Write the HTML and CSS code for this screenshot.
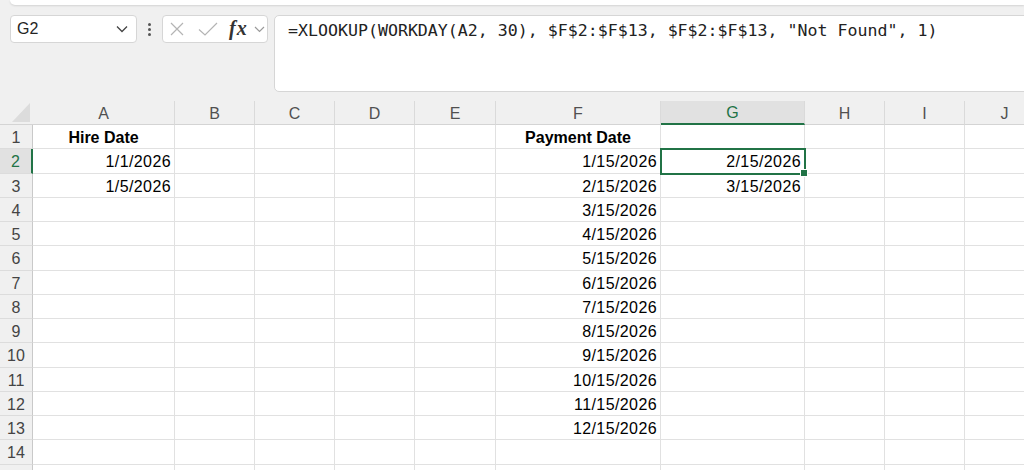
FILE: index.html
```html
<!DOCTYPE html>
<html lang="en">
<head>
    <meta charset="UTF-8">
    <meta name="viewport" content="width=device-width, initial-scale=1.0">
    <title>Book1 - Excel</title>
    <link rel="stylesheet" href="styles.css">
</head>
<body>
    <div class="ribbon-edge"></div>

    <div class="formula-bar">
        <div class="name-box">
            <span>G2</span>
            <svg width="12" height="8" viewBox="0 0 12 8"><polyline points="1,1.5 6,6.5 11,1.5" fill="none" stroke="#444" stroke-width="1.3"/></svg>
        </div>
        <div class="more-dots"><i></i><i></i><i></i></div>
        <div class="fx-box">
            <svg class="ico-cancel" width="14" height="14" viewBox="0 0 14 14"><path d="M1 1 L13 13 M13 1 L1 13" stroke="#b4b4b4" stroke-width="1.2" fill="none"/></svg>
            <svg class="ico-enter" width="20" height="14" viewBox="0 0 20 14"><polyline points="1,7.5 7,13 19,1" fill="none" stroke="#b4b4b4" stroke-width="1.2"/></svg>
            <span class="fx">fx</span>
            <svg class="ico-more" width="11" height="7" viewBox="0 0 11 7"><polyline points="1,1 5.5,5.5 10,1" fill="none" stroke="#9a9a9a" stroke-width="1.2"/></svg>
        </div>
        <div class="formula-input">=XLOOKUP(WORKDAY(A2, 30), $F$2:$F$13, $F$2:$F$13, "Not Found", 1)</div>
    </div>

    <div class="sheet">
        <div class="corner"></div><div class="hd">A</div><div class="hd">B</div><div class="hd">C</div><div class="hd">D</div><div class="hd">E</div><div class="hd">F</div><div class="hd sel-col">G</div><div class="hd">H</div><div class="hd">I</div><div class="hd">J</div>

        <div class="rh">1</div><div class="c b">Hire Date</div><div class="c"></div><div class="c"></div><div class="c"></div><div class="c"></div><div class="c b">Payment Date</div><div class="c"></div><div class="c"></div><div class="c"></div><div class="c"></div>
        <div class="rh sel-row">2</div><div class="c r">1/1/2026</div><div class="c"></div><div class="c"></div><div class="c"></div><div class="c"></div><div class="c r">1/15/2026</div><div class="c r active">2/15/2026</div><div class="c"></div><div class="c"></div><div class="c"></div>
        <div class="rh">3</div><div class="c r">1/5/2026</div><div class="c"></div><div class="c"></div><div class="c"></div><div class="c"></div><div class="c r">2/15/2026</div><div class="c r">3/15/2026</div><div class="c"></div><div class="c"></div><div class="c"></div>
        <div class="rh">4</div><div class="c"></div><div class="c"></div><div class="c"></div><div class="c"></div><div class="c"></div><div class="c r">3/15/2026</div><div class="c"></div><div class="c"></div><div class="c"></div><div class="c"></div>
        <div class="rh">5</div><div class="c"></div><div class="c"></div><div class="c"></div><div class="c"></div><div class="c"></div><div class="c r">4/15/2026</div><div class="c"></div><div class="c"></div><div class="c"></div><div class="c"></div>
        <div class="rh">6</div><div class="c"></div><div class="c"></div><div class="c"></div><div class="c"></div><div class="c"></div><div class="c r">5/15/2026</div><div class="c"></div><div class="c"></div><div class="c"></div><div class="c"></div>
        <div class="rh">7</div><div class="c"></div><div class="c"></div><div class="c"></div><div class="c"></div><div class="c"></div><div class="c r">6/15/2026</div><div class="c"></div><div class="c"></div><div class="c"></div><div class="c"></div>
        <div class="rh">8</div><div class="c"></div><div class="c"></div><div class="c"></div><div class="c"></div><div class="c"></div><div class="c r">7/15/2026</div><div class="c"></div><div class="c"></div><div class="c"></div><div class="c"></div>
        <div class="rh">9</div><div class="c"></div><div class="c"></div><div class="c"></div><div class="c"></div><div class="c"></div><div class="c r">8/15/2026</div><div class="c"></div><div class="c"></div><div class="c"></div><div class="c"></div>
        <div class="rh">10</div><div class="c"></div><div class="c"></div><div class="c"></div><div class="c"></div><div class="c"></div><div class="c r">9/15/2026</div><div class="c"></div><div class="c"></div><div class="c"></div><div class="c"></div>
        <div class="rh">11</div><div class="c"></div><div class="c"></div><div class="c"></div><div class="c"></div><div class="c"></div><div class="c r">10/15/2026</div><div class="c"></div><div class="c"></div><div class="c"></div><div class="c"></div>
        <div class="rh">12</div><div class="c"></div><div class="c"></div><div class="c"></div><div class="c"></div><div class="c"></div><div class="c r">11/15/2026</div><div class="c"></div><div class="c"></div><div class="c"></div><div class="c"></div>
        <div class="rh">13</div><div class="c"></div><div class="c"></div><div class="c"></div><div class="c"></div><div class="c"></div><div class="c r">12/15/2026</div><div class="c"></div><div class="c"></div><div class="c"></div><div class="c"></div>
        <div class="rh">14</div><div class="c"></div><div class="c"></div><div class="c"></div><div class="c"></div><div class="c"></div><div class="c"></div><div class="c"></div><div class="c"></div><div class="c"></div><div class="c"></div>
        <div class="rh"></div><div class="c"></div><div class="c"></div><div class="c"></div><div class="c"></div><div class="c"></div><div class="c"></div><div class="c"></div><div class="c"></div><div class="c"></div><div class="c"></div>
    </div>
</body>
</html>
```

FILE: styles.css
```css
* {
    box-sizing: border-box;
}
body {
    margin: 0;
    height: 470px;
    overflow: hidden;
    background-color: #f0f0f0;
    font-family: "Liberation Sans", Arial, sans-serif;
    color: #000;
}

.ribbon-edge {
    height: 5px;
    margin-left: 10px;
    background-color: #fff;
    border-bottom-left-radius: 6px;
    box-shadow: rgba(0, 0, 0, 0.12) 0px 1px 2px;
}

/* formula bar */
.formula-bar {
    display: flex;
    align-items: flex-start;
    padding: 10px 0 0 10px;
}
.formula-bar > * {
    flex-shrink: 0;
}
.name-box {
    width: 127px;
    height: 28px;
    display: flex;
    align-items: center;
    justify-content: space-between;
    padding: 0 8px 0 6px;
    background-color: #fff;
    border: 1px solid #d6d6d6;
    border-radius: 4px;
    font-size: 16px;
    color: #242424;
}
.more-dots {
    width: 25px;
    height: 28px;
    display: flex;
    flex-direction: column;
    align-items: center;
    justify-content: center;
    gap: 2px;
}
.more-dots i {
    width: 3px;
    height: 3px;
    border-radius: 50%;
    background-color: #555;
}
.fx-box {
    width: 106px;
    height: 28px;
    display: flex;
    align-items: center;
    background-color: #fff;
    border: 1px solid #d6d6d6;
    border-radius: 4px;
}
.ico-cancel {
    margin-left: 7px;
}
.ico-enter {
    margin-left: 14px;
}
.fx {
    margin-left: 11px;
    margin-top: -2px;
    font-family: "Liberation Serif", serif;
    font-style: italic;
    font-weight: bold;
    font-size: 20px;
    letter-spacing: 1px;
    line-height: 1;
    color: #333;
}
.ico-more {
    margin-left: 6px;
}
.formula-input {
    width: 800px;
    height: 77px;
    margin-left: 6px;
    padding: 5px 0 0 13px;
    background-color: #fff;
    border: 1px solid #d6d6d6;
    border-radius: 5px;
    font-family: "DejaVu Sans Mono", monospace;
    font-size: 16.6px;
    line-height: 20px;
    color: #222;
    white-space: pre;
}

/* grid */
.sheet {
    margin-top: 9px;
    display: grid;
    grid-template-columns: 33px 142px 80px 80px 80px 81px 165px 144px 80px 80px 80px;
    grid-template-rows: 24px repeat(15, 24.25px);
    width: 1045px;
}
.corner {
    position: relative;
    background-color: #f0f0f0;
    border-bottom: 1px solid #d4d4d4;
}
.corner::after {
    content: "";
    position: absolute;
    right: 3px;
    bottom: 2px;
    width: 18px;
    height: 19px;
    background-color: #dcdcdc;
    clip-path: polygon(100% 0, 100% 100%, 0 100%);
}
.hd {
    display: flex;
    align-items: center;
    justify-content: center;
    padding-top: 2px;
    background-color: #f0f0f0;
    border-right: 1px solid #dadada;
    border-bottom: 1px solid #d4d4d4;
    font-size: 16px;
    color: #505050;
}
.hd.sel-col {
    background-color: #e1e1e1;
    color: #217346;
    border-bottom: 2px solid #217346;
}
.rh {
    display: flex;
    align-items: center;
    justify-content: center;
    padding-top: 3px;
    background-color: #f0f0f0;
    border-right: 1px solid #c9c9c9;
    border-bottom: 1px solid #dcdcdc;
    font-size: 16px;
    color: #444;
}
.rh.sel-row {
    background-color: #e1e1e1;
    color: #217346;
    border-right: 2px solid #217346;
}
.c {
    display: flex;
    align-items: center;
    padding: 3px 3px 0;
    background-color: #fff;
    border-right: 1px solid #e1e1e1;
    border-bottom: 1px solid #e1e1e1;
    font-size: 16px;
    white-space: nowrap;
}
.c.r {
    justify-content: flex-end;
    letter-spacing: 0.4px;
}
.c.b {
    justify-content: center;
    font-weight: bold;
}
.c.active {
    position: relative;
    z-index: 1;
    outline: 2px solid #217346;
    outline-offset: -1px;
}
.c.active::after {
    content: "";
    position: absolute;
    right: -4px;
    bottom: -4px;
    width: 6px;
    height: 6px;
    background-color: #217346;
    border: 1px solid #fff;
}
```
